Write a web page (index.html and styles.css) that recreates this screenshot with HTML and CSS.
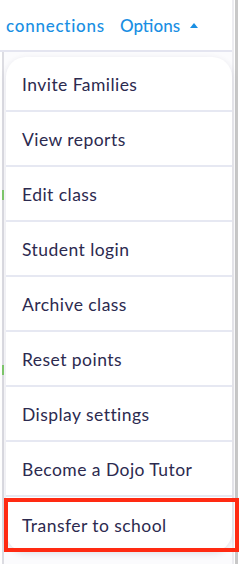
FILE: index.html
```html
<!DOCTYPE html>
<html>
<head>
<meta charset="utf-8">
<link rel="stylesheet" href="styles.css">
</head>
<body>
<div class="page">
  <div class="main">
    <div class="topbar">
      <span class="link">connections</span>
      <span class="link options">Options <span class="caret"></span></span>
    </div>
    <div class="sep"></div>
    <div class="content">
      <span class="dot dot1"></span>
      <span class="dot dot2"></span>
      <div class="menu">
        <div class="item">Invite Families</div>
        <div class="item">View reports</div>
        <div class="item">Edit class</div>
        <div class="item">Student login</div>
        <div class="item">Archive class</div>
        <div class="item">Reset points</div>
        <div class="item">Display settings</div>
        <div class="item">Become a Dojo Tutor</div>
        <div class="item last">Transfer to school</div>
      </div>
      <div class="highlight"></div>
    </div>
  </div>
  <div class="scrollbar"></div>
</div>
</body>
</html>
```
FILE: styles.css
```css
html, body {
  margin: 0;
  padding: 0;
  background: #ffffff;
}
body {
  width: 243px;
  height: 564px;
  overflow: hidden;
  font-family: "Lato", "Noto Sans", sans-serif;
}
.page {
  display: flex;
  height: 564px;
}
.main {
  width: 232px;
  border-right: 2px solid #ececf0;
  display: flex;
  flex-direction: column;
}
.scrollbar {
  width: 3px;
  margin-left: 1px;
  background: #c8c8c8;
}
.topbar {
  height: 50px;
  display: flex;
  align-items: flex-end;
  padding-left: 6px;
  gap: 15px;
  box-sizing: border-box;
  padding-bottom: 16px;
}
.link {
  color: #1a8fe3;
  font-size: 17px;
  font-weight: 500;
  letter-spacing: 0.75px;
  line-height: 1;
}
.options {
  display: flex;
  align-items: center;
  gap: 10px;
  letter-spacing: 0;
}
.caret {
  width: 0;
  height: 0;
  border-left: 4px solid transparent;
  border-right: 4px solid transparent;
  border-bottom: 5px solid #1a8fe3;
}
.sep {
  height: 2px;
  background: #e4e5f0;
}
.content {
  position: relative;
  flex: 1;
  margin-left: 2px;
  border-left: 2px solid #dcdce2;
  padding: 5px 0 0 2px;
  background: #fbfbfd;
}
.dot {
  position: absolute;
  left: -2px;
  width: 2px;
  height: 10px;
  background: #7cc46a;
}
.dot1 { top: 138px; }
.dot2 { top: 313px; }
.menu {
  background: #ffffff;
  border-radius: 20px;
  box-shadow: 0 2px 6px rgba(40, 40, 80, 0.12);
  overflow: hidden;
}
.item {
  height: 55px;
  box-sizing: border-box;
  border-bottom: 2px solid #e6e8f2;
  display: flex;
  align-items: center;
  padding-left: 16px;
  padding-top: 2px;
  color: #2c2a4f;
  font-size: 17.5px;
  letter-spacing: 0.45px;
}
.item.last {
  border-bottom: none;
}
.highlight {
  position: absolute;
  left: 0px;
  top: 446px;
  width: 235px;
  height: 54px;
  box-sizing: border-box;
  border: 4px solid #ff2a12;
}
```
